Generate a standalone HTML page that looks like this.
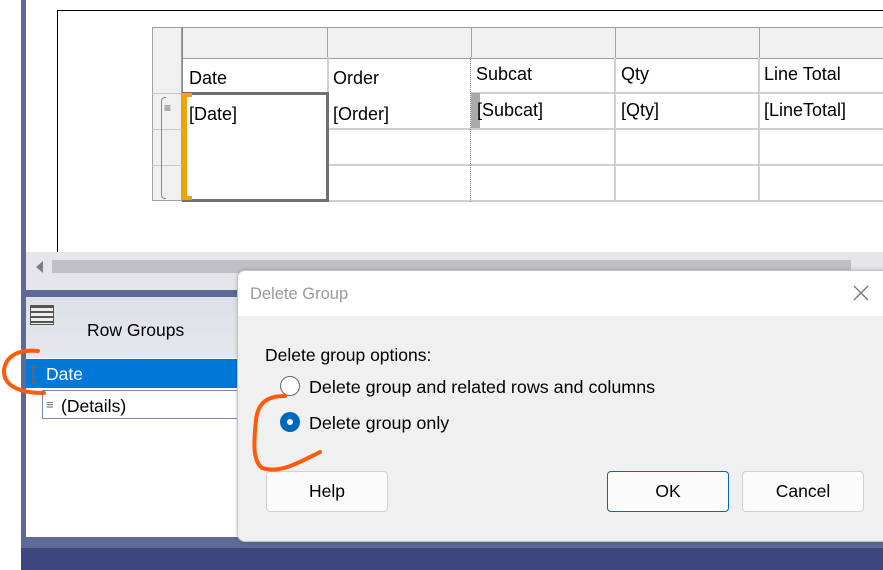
<!DOCTYPE html>
<html><head><meta charset="utf-8"><style>
body{margin:0;width:883px;height:570px;overflow:hidden;position:relative;background:#fff;font-family:"Liberation Sans","DejaVu Sans",sans-serif;color:#000}
.a{position:absolute}
.cell{position:absolute;box-sizing:border-box;font-size:18px}
.btn{position:absolute;box-sizing:border-box;height:41px;width:122px;background:#fbfbfb;border:1px solid #d0d0d0;border-radius:4px;font-size:17.5px;text-align:center;line-height:39px;top:471px}
</style></head><body>
<div class="a" style="left:21px;top:0;width:5px;height:570px;background:#5c6a97"></div>
<div class="a" style="left:57px;top:10px;width:826px;height:242px;border-left:1px solid #000;border-top:1px solid #000"></div>
<!-- table -->
<div class="a" style="left:152px;top:27px;width:731px;height:30px;background:#f0f0f0;border-top:1px solid #a0a0a0;border-bottom:1px solid #a0a0a0"></div>
<div class="a" style="left:152px;top:27px;width:30px;height:174px;background:#f0f0f0;border:1px solid #a0a0a0;box-sizing:border-box"></div>
<div class="a" style="left:152px;top:93px;width:30px;height:1px;background:#c8c8c8"></div>
<div class="a" style="left:152px;top:129px;width:30px;height:1px;background:#c8c8c8"></div>
<div class="a" style="left:152px;top:165px;width:30px;height:1px;background:#c8c8c8"></div>
<div class="a" style="left:161px;top:97px;width:4px;height:100px;border:1px solid #888;border-right:none;border-radius:4px 0 0 4px"></div>
<div class="a" style="left:164px;top:103px;font-size:12px;color:#555;line-height:10px">≡</div>
<div class="a" style="left:182px;top:27px;width:1px;height:174px;background:#888"></div>
<div class="a" style="left:327px;top:27px;width:1px;height:30px;background:#a0a0a0"></div>
<div class="a" style="left:471px;top:27px;width:1px;height:30px;background:#a0a0a0"></div>
<div class="a" style="left:615px;top:27px;width:1px;height:30px;background:#a0a0a0"></div>
<div class="a" style="left:759px;top:27px;width:1px;height:30px;background:#a0a0a0"></div>
<!-- body grid -->
<div class="a" style="left:471px;top:92px;width:412px;height:2px;background:#d0d0d0"></div>
<div class="a" style="left:327px;top:128px;width:556px;height:2px;background:#d0d0d0"></div>
<div class="a" style="left:327px;top:164px;width:556px;height:2px;background:#d0d0d0"></div>
<div class="a" style="left:327px;top:200px;width:556px;height:2px;background:#d0d0d0"></div>
<div class="a" style="left:327px;top:57px;width:2px;height:145px;background:#d0d0d0"></div>
<div class="a" style="left:470px;top:57px;width:0;height:145px;border-left:1px dotted #888"></div>
<div class="a" style="left:614px;top:57px;width:2px;height:145px;background:#d0d0d0"></div>
<div class="a" style="left:758px;top:57px;width:2px;height:145px;background:#d0d0d0"></div>
<div class="a" style="left:471px;top:93px;width:9px;height:35px;background:#aaa"></div>
<div class="a" style="left:182px;top:92px;width:147px;height:110px;border:3px solid #707070;box-sizing:border-box"></div>
<div class="a" style="left:182px;top:93px;width:5px;height:107px;background:#f0a30a"></div>
<div class="a" style="left:182px;top:93px;width:10px;height:4px;background:#f0a30a"></div>
<div class="a" style="left:182px;top:196px;width:10px;height:4px;background:#f0a30a"></div>
<div class="cell" style="left:189px;top:68px">Date</div>
<div class="cell" style="left:333px;top:68px">Order</div>
<div class="cell" style="left:476px;top:64px">Subcat</div>
<div class="cell" style="left:621px;top:64px">Qty</div>
<div class="cell" style="left:764px;top:64px">Line Total</div>
<div class="cell" style="left:189px;top:104px">[Date]</div>
<div class="cell" style="left:333px;top:104px">[Order]</div>
<div class="cell" style="left:477px;top:100px">[Subcat]</div>
<div class="cell" style="left:621px;top:100px">[Qty]</div>
<div class="cell" style="left:764px;top:100px">[LineTotal]</div>
<!-- scrollbar -->
<div class="a" style="left:26px;top:252px;width:857px;height:38px;background:#e6e6ea"></div>
<div class="a" style="left:52px;top:260px;width:799px;height:13px;background:#bfc0c6"></div>
<div class="a" style="left:36px;top:261px;width:0;height:0;border-top:6px solid transparent;border-bottom:6px solid transparent;border-right:7px solid #7a7f90"></div>
<div class="a" style="left:21px;top:290px;width:862px;height:7px;background:#5c6a97"></div>
<!-- row groups -->
<div class="a" style="left:26px;top:297px;width:240px;height:240px;background:#fff"></div>
<div class="a" style="left:26px;top:297px;width:240px;height:61px;background:linear-gradient(#dde0e8,#e6e8ee)"></div>
<div class="a" style="left:30px;top:305px;width:24px;height:20px;background:repeating-linear-gradient(#555 0 2px,#eee 2px 5px);border:1px solid #555;box-sizing:border-box"></div>
<div class="a" style="left:87px;top:320px;font-size:17.5px">Row Groups</div>
<div class="a" style="left:26px;top:359px;width:240px;height:29px;background:#0078d7"></div>
<div class="a" style="left:32px;top:366px;width:3px;height:14px;border:2px solid #666;border-right:none"></div>
<div class="a" style="left:46px;top:364px;font-size:17.5px;color:#fff">Date</div>
<div class="a" style="left:42px;top:390px;width:220px;height:29px;border:1px solid #7a86b0;border-right:none;box-sizing:border-box;background:#fff"></div>
<div class="a" style="left:46px;top:397px;font-size:13px;color:#666">≡</div>
<div class="a" style="left:61px;top:396px;font-size:17.5px">(Details)</div>
<div class="a" style="left:21px;top:537px;width:862px;height:11px;background:#5c6a97"></div>
<div class="a" style="left:21px;top:548px;width:862px;height:22px;background:#3b477e"></div>
<!-- dialog -->
<div class="a" style="left:237px;top:270px;width:660px;height:270px;background:#f0f0f0;border:1px solid #c4c4c4;border-radius:8px;box-shadow:0 0 4px rgba(0,0,0,.2);overflow:hidden">
 <div style="height:45px;background:#fff"></div>
</div>
<div class="a" style="left:250px;top:285px;font-size:16.5px;color:#999">Delete Group</div>
<svg class="a" style="left:853px;top:285px" width="16" height="16"><path d="M1 1L15 15M15 1L1 15" stroke="#777" stroke-width="1.3"/></svg>
<div class="a" style="left:265px;top:345px;font-size:17.5px">Delete group options:</div>
<div class="a" style="left:280px;top:376px;width:20px;height:20px;border:1px solid #666;border-radius:50%;box-sizing:border-box;background:#fff"></div>
<div class="a" style="left:309px;top:377px;font-size:17.9px">Delete group and related rows and columns</div>
<div class="a" style="left:280px;top:412px;width:20px;height:20px;border-radius:50%;background:#0067c0"></div>
<div class="a" style="left:287px;top:419px;width:6px;height:6px;border-radius:50%;background:#fff"></div>
<div class="a" style="left:309px;top:413px;font-size:17.9px">Delete group only</div>
<div class="btn" style="left:266px">Help</div>
<div class="btn" style="left:607px;border-color:#0067c0">OK</div>
<div class="btn" style="left:742px">Cancel</div>
<!-- annotations -->
<svg class="a" style="left:0;top:0" width="883" height="570"><g fill="none" stroke="#ff5a0a" stroke-width="4" stroke-linecap="round">
<path d="M38 351C20 349 6 355 4 370C3 385 18 393 44 393"/>
<path d="M285 396C268 396 258 402 256 420C254 440 252 460 262 468C280 474 300 462 320 452"/>
</g></svg>
</body></html>
